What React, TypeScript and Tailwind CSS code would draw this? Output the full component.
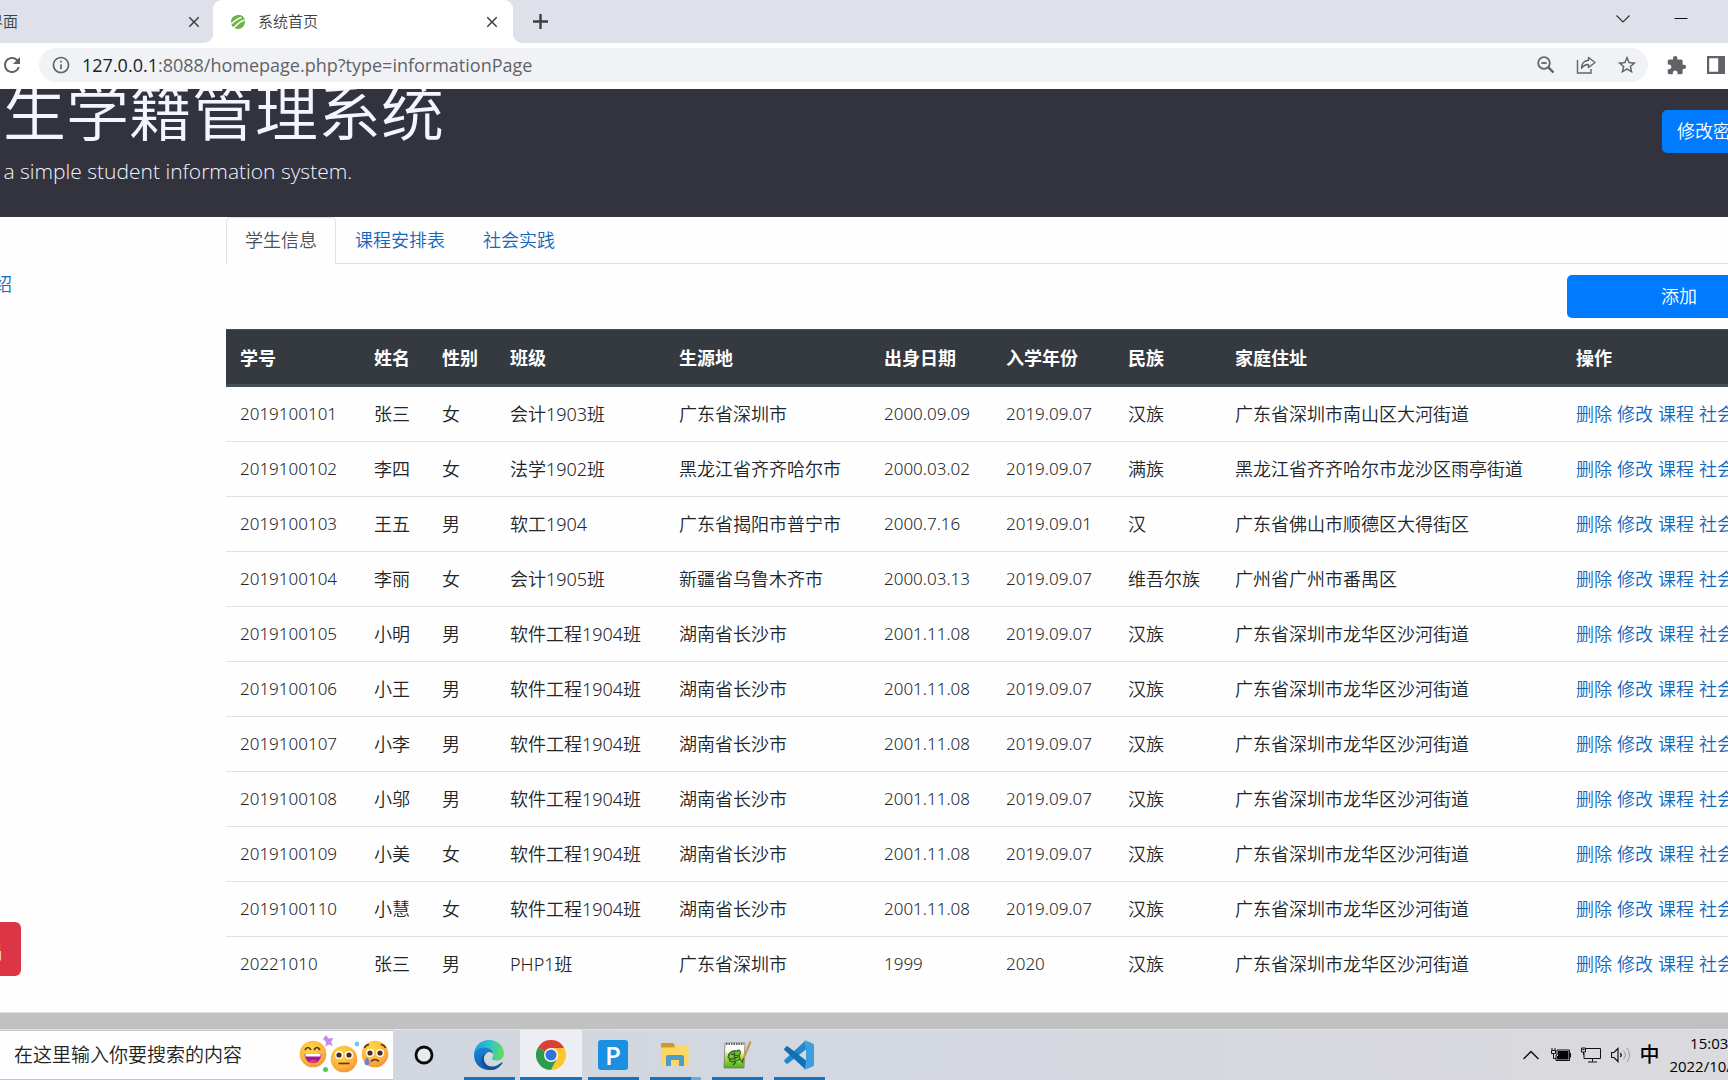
import React, { useState } from 'react';
import { MdClose, MdExtension, MdInfoOutline, MdRefresh, MdStarBorder } from 'react-icons/md';

interface Student {
  id: string;
  name: string;
  gender: string;
  className: string;
  origin: string;
  birthday: string;
  enrolled: string;
  nation: string;
  address: string;
}

const students: Student[] = [
  { id: '2019100101', name: '张三', gender: '女', className: '会计1903班', origin: '广东省深圳市', birthday: '2000.09.09', enrolled: '2019.09.07', nation: '汉族', address: '广东省深圳市南山区大河街道' },
  { id: '2019100102', name: '李四', gender: '女', className: '法学1902班', origin: '黑龙江省齐齐哈尔市', birthday: '2000.03.02', enrolled: '2019.09.07', nation: '满族', address: '黑龙江省齐齐哈尔市龙沙区雨亭街道' },
  { id: '2019100103', name: '王五', gender: '男', className: '软工1904', origin: '广东省揭阳市普宁市', birthday: '2000.7.16', enrolled: '2019.09.01', nation: '汉', address: '广东省佛山市顺德区大得街区' },
  { id: '2019100104', name: '李丽', gender: '女', className: '会计1905班', origin: '新疆省乌鲁木齐市', birthday: '2000.03.13', enrolled: '2019.09.07', nation: '维吾尔族', address: '广州省广州市番禺区' },
  { id: '2019100105', name: '小明', gender: '男', className: '软件工程1904班', origin: '湖南省长沙市', birthday: '2001.11.08', enrolled: '2019.09.07', nation: '汉族', address: '广东省深圳市龙华区沙河街道' },
  { id: '2019100106', name: '小王', gender: '男', className: '软件工程1904班', origin: '湖南省长沙市', birthday: '2001.11.08', enrolled: '2019.09.07', nation: '汉族', address: '广东省深圳市龙华区沙河街道' },
  { id: '2019100107', name: '小李', gender: '男', className: '软件工程1904班', origin: '湖南省长沙市', birthday: '2001.11.08', enrolled: '2019.09.07', nation: '汉族', address: '广东省深圳市龙华区沙河街道' },
  { id: '2019100108', name: '小邬', gender: '男', className: '软件工程1904班', origin: '湖南省长沙市', birthday: '2001.11.08', enrolled: '2019.09.07', nation: '汉族', address: '广东省深圳市龙华区沙河街道' },
  { id: '2019100109', name: '小美', gender: '女', className: '软件工程1904班', origin: '湖南省长沙市', birthday: '2001.11.08', enrolled: '2019.09.07', nation: '汉族', address: '广东省深圳市龙华区沙河街道' },
  { id: '2019100110', name: '小慧', gender: '女', className: '软件工程1904班', origin: '湖南省长沙市', birthday: '2001.11.08', enrolled: '2019.09.07', nation: '汉族', address: '广东省深圳市龙华区沙河街道' },
  { id: '20221010', name: '张三', gender: '男', className: 'PHP1班', origin: '广东省深圳市', birthday: '1999', enrolled: '2020', nation: '汉族', address: '广东省深圳市龙华区沙河街道' },
];

// the last column takes whatever is left
const columns = [
  { title: '学号', width: 'w-[134px]' },
  { title: '姓名', width: 'w-[68px]' },
  { title: '性别', width: 'w-[68px]' },
  { title: '班级', width: 'w-[169px]' },
  { title: '生源地', width: 'w-[205px]' },
  { title: '出身日期', width: 'w-[122px]' },
  { title: '入学年份', width: 'w-[122px]' },
  { title: '民族', width: 'w-[107px]' },
  { title: '家庭住址', width: 'w-[341px]' },
  { title: '操作', width: '' },
];

const actions = ['删除', '修改', '课程', '社会实践'];
const tabs = ['学生信息', '课程安排表', '社会实践'];

function Favicon() {
  return (
    <svg width="16" height="16" viewBox="0 0 16 16">
      <path d="M8 1c4-.4 7 2 7 6.500c0 4-3 7.500-7 7.500c-4 0-7-3-7-7C1 4 4 1.300 8 1z" fill="#6fb347" />
      <path d="M.5 10C4 9.500 5 4.500 11.500 3.500M3 14C7 12.500 7 8 14.500 6" stroke="#fff" strokeWidth="1.500" fill="none" />
    </svg>
  );
}

function BrowserTabs() {
  return (
    <div className="flex h-[43px] bg-white text-[15px] font-[350] text-[#3c4043]">
      <div className="flex w-[213px] shrink-0 items-center justify-between overflow-hidden rounded-br-[9px] bg-[#dee1e9] pr-2.5">
        <span className="-ml-[42px] whitespace-nowrap">登录界面</span>
        <button aria-label="关闭"><MdClose size={18} /></button>
      </div>
      <div className="w-[300px] shrink-0 bg-[#dee1e9]">
        <div className="flex h-full items-center rounded-t-[9px] bg-white pl-[17px] pr-3">
          <Favicon />
          <span className="ml-3 flex-1">系统首页</span>
          <button aria-label="关闭"><MdClose size={18} /></button>
        </div>
      </div>
      <div className="flex flex-1 items-center justify-between rounded-bl-[9px] bg-[#dee1e9] pl-5 pr-10">
        <button aria-label="新标签页">
          <svg width="15" height="15" viewBox="0 0 15 15" stroke="#3c4043" strokeWidth="2.400"><path d="M7.500 0v15M0 7.500h15" /></svg>
        </button>
        <div className="flex items-center gap-[44px] pb-1.5">
          <button aria-label="搜索标签页">
            <svg width="14" height="8" viewBox="0 0 14 8" fill="none" stroke="#333" strokeWidth="1.200"><path d="M.5.5L7 7l6.500-6.500" /></svg>
          </button>
          <button aria-label="最小化">
            <svg width="14" height="8" viewBox="0 0 14 8" stroke="#111"><path d="M.5 3.500h13" /></svg>
          </button>
        </div>
      </div>
    </div>
  );
}

function AddressBar() {
  return (
    <div className="flex h-[46px] items-center bg-white pb-0.5 text-[#5f6368]">
      <button aria-label="重新加载" className="flex w-[39px] shrink-0"><MdRefresh size={24} /></button>
      <div className="flex h-[34px] flex-1 items-center rounded-full bg-[#f0f2f5] pl-3 pr-2.5">
        <MdInfoOutline size={20} />
        <div className="ml-[11px] flex flex-1 text-[18px]">
          <span className="text-[#202124]">127.0.0.1</span>
          <span>:8088/homepage.php?type=informationPage</span>
        </div>
        <div className="flex items-center gap-5">
          <button aria-label="缩放">
            <svg width="20" height="20" viewBox="0 0 20 20" fill="none" stroke="#5f6368" strokeWidth="1.800">
              <circle cx="8" cy="8" r="5.800" />
              <path d="M5.300 8h5.400" />
              <path d="M12.300 12.300l5.200 5.200" strokeWidth="2.400" />
            </svg>
          </button>
          <button aria-label="分享">
            <svg width="20" height="20" viewBox="0 0 20 20" fill="none" stroke="#5f6368" strokeWidth="1.400">
              <path d="M1.500 5v13h13.500v-4" />
              <path d="M12.500 2.500l6.500 5-6.500 5v-3c-3.500 0-5.500 1.500-7 4 0-4.500 2.500-8 7-8.300z" strokeLinejoin="round" />
            </svg>
          </button>
          <button aria-label="收藏"><MdStarBorder size={22} /></button>
        </div>
      </div>
      <div className="flex shrink-0 items-center gap-5 pl-[18px] pr-[3px]">
        <button aria-label="扩展程序"><MdExtension size={21} /></button>
        <button aria-label="侧边栏">
          <svg width="18" height="18" viewBox="0 0 18 18" fill="#5f6368"><path d="M0 0h18v18H0zM2.200 2.200v13.600h9V2.200z" fillRule="evenodd" /></svg>
        </button>
      </div>
    </div>
  );
}

function StudentTable() {
  return (
    <table className="mt-[11px] w-full table-fixed border-separate border-spacing-0 text-left leading-6 whitespace-nowrap">
      <thead className="bg-[#343a40] text-white">
        <tr>
          {columns.map((c) => (
            <th key={c.title} className={`${c.width} border-t border-b-[3px] border-[#454d55] px-3.5 pt-4 pb-3.5 font-bold`}>{c.title}</th>
          ))}
        </tr>
      </thead>
      <tbody className="[&_td]:border-b [&_td]:border-[#dee2e6] [&_td]:px-3.5 [&_td]:py-[15px] [&_tr:last-child_td]:border-transparent">
        {students.map((s) => (
          <tr key={s.id}>
            <td className="text-[17px]">{s.id}</td>
            <td>{s.name}</td>
            <td>{s.gender}</td>
            <td>{s.className}</td>
            <td>{s.origin}</td>
            <td className="text-[17px]">{s.birthday}</td>
            <td className="text-[17px]">{s.enrolled}</td>
            <td>{s.nation}</td>
            <td>{s.address}</td>
            <td>
              <div className="flex gap-[5px]">
                {actions.map((a) => (
                  <a key={a} href="#" className="text-[#1068bd]">{a}</a>
                ))}
              </div>
            </td>
          </tr>
        ))}
      </tbody>
    </table>
  );
}

function HomePage() {
  const [active, setActive] = useState(tabs[0]);

  return (
    // the page is zoomed in and scrolled a little to the right
    <div className="flex flex-1 flex-col overflow-hidden bg-[#fefefe] font-['Noto_Sans','Noto_Sans_CJK_SC',sans-serif] text-[18px] font-[350] text-[#212529]">
      <div className="-ml-[60px] flex min-w-[1851px] flex-1 flex-col">
        <header className="flex items-start justify-between overflow-hidden bg-[#32333d] pr-[27px] pb-[29px] text-[#f3f5ff]">
          <div>
            <h1 className="-mt-2.5 text-[63px] leading-[63px]">学生学籍管理系统</h1>
            <p className="mt-[13px] font-['Open_Sans',sans-serif] text-[21px] leading-[33px] font-light">This is a simple student information system.</p>
          </div>
          <button className="mt-[21px] rounded-[5px] bg-[#007bff] px-[15px] py-2 leading-[27px] text-white">修改密码</button>
        </header>
        <div className="flex flex-1">
          <aside className="flex w-[286px] shrink-0 flex-col items-start justify-between pt-[54px] pb-9">
            <a href="#" className="leading-[27px] text-[#1068bd]">系统介绍</a>
            <button className="rounded-md bg-[#dc3545] py-[11px] pr-[18px] pl-[19px] text-[22px] leading-8 text-white">退出</button>
          </aside>
          <main className="flex-1">
            <nav className="flex border-b border-[#dee2e6]">
              {tabs.map((t) => (
                <a
                  key={t}
                  href="#"
                  onClick={() => setActive(t)}
                  className={`-mb-px rounded-t-[5px] border px-[18px] py-[9px] leading-[27px] ${
                    t === active ? 'border-[#dee2e6] border-b-[#fefefe] bg-[#fefefe] text-[#495057]' : 'border-transparent text-[#1068bd]'
                  }`}
                >
                  {t}
                </a>
              ))}
            </nav>
            <div className="mt-[11px] flex justify-end">
              <button className="w-[224px] rounded-[5px] bg-[#007bff] py-2 leading-[27px] text-white">添加</button>
            </div>
            <StudentTable />
          </main>
        </div>
      </div>
    </div>
  );
}

function SearchFaces() {
  return (
    <svg width="92" height="42" viewBox="0 0 92 42" className="shrink-0">
      <defs>
        <radialGradient id="face" cx=".4" cy=".3" r=".8">
          <stop offset="0" stopColor="#ffd84a" />
          <stop offset=".65" stopColor="#fbb03b" />
          <stop offset="1" stopColor="#ee8a3c" />
        </radialGradient>
      </defs>
      <circle cx="15" cy="20" r="13.300" fill="url(#face)" />
      <path d="M7 16q3-5 6 0M16 16q3-5 6 0" stroke="#5a3218" strokeWidth="1.700" fill="none" />
      <path d="M6.500 20h17q-1 9-8.500 9t-8.500-9z" fill="#a3189a" />
      <path d="M7.500 20h15v2.500h-15z" fill="#fff" />
      <path d="M11 27q4-2.500 8 0-4 3-8 0z" fill="#ef3e6a" />
      <circle cx="46" cy="25" r="13.300" fill="url(#face)" />
      <circle cx="41" cy="21" r="4" fill="#fff" />
      <circle cx="51" cy="21" r="4" fill="#fff" />
      <circle cx="41" cy="21" r="2.600" fill="#4a2a18" />
      <circle cx="51" cy="21" r="2.600" fill="#4a2a18" />
      <path d="M40.500 29.500h11" stroke="#5a3218" strokeWidth="1.600" />
      <circle cx="77" cy="20" r="13.300" fill="url(#face)" />
      <circle cx="72" cy="19" r="4" fill="#fff" />
      <circle cx="82" cy="19" r="4" fill="#fff" />
      <circle cx="72" cy="19" r="2.600" fill="#4a2a18" />
      <circle cx="82" cy="19" r="2.600" fill="#4a2a18" />
      <path d="M66.500 14q1-3 4.500-3.500M83 10.500q3.500.5 4.500 3.500M73 27.500q4-4 8 0" stroke="#5a3218" strokeWidth="1.600" fill="none" />
      <path d="M69 23q5 7 0 8.500-5-1.500 0-8.500z" fill="#6d7fd8" />
      <path d="M28 1l2.500 3.500 5-.5-2.500 4 2 4-4-1.500-3.500 2 .5-4.500-3-3z" fill="#c98be8" />
      <circle cx="59" cy="10" r="2.400" fill="#7cc5ee" />
      <circle cx="27.500" cy="35.500" r="2.500" fill="#4fc46a" />
    </svg>
  );
}

function EdgeIcon() {
  return (
    <svg width="30" height="30" viewBox="0 0 30 30">
      <defs>
        <linearGradient id="edgeTop" x1="0" y1=".4" x2="1" y2=".5">
          <stop offset="0" stopColor="#1e9fe0" />
          <stop offset=".5" stopColor="#2fc3c9" />
          <stop offset="1" stopColor="#63dd5a" />
        </linearGradient>
        <linearGradient id="edgeBody" x1="0" y1="0" x2=".3" y2="1">
          <stop offset="0" stopColor="#1b86d8" />
          <stop offset="1" stopColor="#0c62b5" />
        </linearGradient>
      </defs>
      <path d="M15 0C23.500 0 30 6 30 13.500c0 4.500-3.300 7-7 7-3.500 0-5-1.200-5-2 0-.7 1.400-1.500 1.400-4C19.400 11 16 8.500 11.500 8.500 6 8.500 1.500 11.500 0 15 0 6.500 6.500 0 15 0z" fill="url(#edgeTop)" />
      <path d="M0 15c0-3.500 4-7.500 9.500-7.500 5 0 9.800 2.500 9.900 7-1-2-3-2.700-4.700-2.400C11 13 9.500 16 10 19.500c.6 5 5 9 10 9.500-1.500.7-3.200 1-5 1C6.500 30 0 23.500 0 15z" fill="url(#edgeBody)" />
      <path d="M13 12.800c-3 2.200-4.200 6-2.300 9.700 2.300 4 8 5.500 13 2.500 1.300-.7 2.700-2 4.300-2.800.5 0 .7.500.4 1C26.500 26.200 22.500 30 17 30 10 29.500 6.500 24 7.500 19c.6-3 2.500-5.200 5.500-6.200z" fill="#174f96" />
    </svg>
  );
}

function ChromeIcon() {
  return (
    <svg width="30" height="30" viewBox="0 0 30 30">
      <path d="M15 15L2 7.500A15 15 0 0 1 28 7.500z" fill="#dc4032" />
      <path d="M15 15L2 7.500A15 15 0 0 0 15 30l6-11z" fill="#2c9c4b" />
      <path d="M15 8h13.300A15 15 0 0 1 15 30l6.200-11.500z" fill="#fcc62d" />
      <circle cx="15" cy="15" r="7" fill="#fff" />
      <circle cx="15" cy="15" r="5.600" fill="#3273e0" />
    </svg>
  );
}

function FolderIcon() {
  return (
    <svg width="30" height="30" viewBox="0 0 30 30">
      <path d="M1 3h12l2 2.500V12H1z" fill="#cf9a27" />
      <path d="M1 7.500h13l2-2h12.500V25H1z" fill="#fbd765" />
      <path d="M6 26V17a2 2 0 0 1 2-2h14a2 2 0 0 1 2 2v9h-5v-6h-8v6z" fill="#4f9cc8" />
    </svg>
  );
}

function NotepadIcon() {
  return (
    <svg width="30" height="30" viewBox="0 0 30 30">
      <defs>
        <linearGradient id="pad" x1="0" y1="0" x2="0" y2="1">
          <stop offset=".3" stopColor="#fdfdf8" />
          <stop offset=".55" stopColor="#b5e34a" />
          <stop offset="1" stopColor="#4cae22" />
        </linearGradient>
      </defs>
      <path d="M3 3h20l-1 25H2z" fill="url(#pad)" stroke="#777" strokeWidth=".8" />
      <path d="M4 4h18" stroke="#666" strokeDasharray="1.500 1" strokeWidth="2" />
      <path d="M6 17c1-5 5-7 9-6 4-3 4 3 2 5 2 2 0 5-4 5-3 2-7 0-5-2zM9 14l8 2M7 20l9-3M12 11l1 9M14 22l-3 3M18 19l3 4" stroke="#2a5519" strokeWidth="1.100" fill="#75bd38" />
      <path d="M28.500 1.500L21 20" stroke="#c69a55" strokeWidth="2.200" />
      <path d="M21.500 18.500l-1 3" stroke="#544127" strokeWidth="1.200" />
    </svg>
  );
}

function VsCodeIcon() {
  return (
    <svg width="30" height="30" viewBox="0 0 30 30">
      <path d="M22 9.500L4 23.500c-.6.400-1.200.3-1.700-.1L.6 21.800c-.6-.6-.6-1.400 0-2L21.500.500z" fill="#2489ca" />
      <path d="M22 20.500L4 6.500c-.6-.4-1.200-.3-1.700.1L.6 8.200c-.6.600-.6 1.400 0 2L21.500 29.500z" fill="#1070b3" />
      <path d="M21.500.4l7.300 3.200c.7.300 1.200 1 1.200 1.800v19.200c0 .8-.5 1.500-1.200 1.800l-7.300 3.200c-.8.300-1.500.1-2-.4.800.7 2.500.2 2.500-1.200V2c0-1.400-1.700-1.900-2.500-1.200.5-.5 1.200-.7 2-.4z" fill="#3c9fe0" />
    </svg>
  );
}

function ParkingIcon() {
  return (
    <span className="flex size-[30px] items-center justify-center rounded-[3px] bg-[#1b90e0] text-[26px] leading-none font-semibold text-white">P</span>
  );
}

const apps = [
  { name: 'Edge', icon: <EdgeIcon />, focused: false },
  { name: 'Chrome', icon: <ChromeIcon />, focused: true },
  { name: 'phpStudy', icon: <ParkingIcon />, focused: false },
  { name: '文件资源管理器', icon: <FolderIcon />, focused: false, stacked: true },
  { name: 'Notepad++', icon: <NotepadIcon />, focused: false },
  { name: 'VS Code', icon: <VsCodeIcon />, focused: false },
];

function Taskbar() {
  return (
    <div className="flex h-[50px] overflow-hidden bg-linear-to-r from-[#d0d5df] via-[#d3d7e0] to-[#dbdade] text-black">
      <label className="flex w-[393px] shrink-0 items-center border-y border-[#c4c4c8] bg-[#fefefe] pl-3.5 pr-[3px]">
        <input
          type="text"
          aria-label="搜索"
          placeholder="在这里输入你要搜索的内容"
          className="min-w-0 flex-1 text-[19px] font-[350] outline-none placeholder:text-[#222]"
        />
        <SearchFaces />
      </label>
      <button aria-label="Cortana" className="flex w-[65px] shrink-0 items-center justify-center pr-1">
        <svg width="20" height="20" viewBox="0 0 20 20"><circle cx="10" cy="10" r="8" fill="#e8eaee" stroke="#0a0a0a" strokeWidth="2.800" /></svg>
      </button>
      {apps.map((app) => (
        <button
          key={app.name}
          aria-label={app.name}
          className={`flex w-[62px] shrink-0 flex-col items-center justify-between pt-2.5 ${app.focused ? 'bg-[#eceef3]' : ''}`}
        >
          {app.icon}
          <span className={`flex h-[3px] justify-end bg-[#1673bf] ${app.focused ? 'w-full' : 'w-[51px]'}`}>
            {app.stacked && <span className="w-2.5 bg-[#6fa9d3]" />}
          </span>
        </button>
      ))}
      <div className="-mr-[21px] ml-auto flex shrink-0 items-center">
        <button aria-label="显示隐藏的图标" className="mr-3">
          <svg width="16" height="10" viewBox="0 0 16 10" fill="none" stroke="#111" strokeWidth="1.500"><path d="M.5 9L8 1.500 15.500 9" /></svg>
        </button>
        <svg width="20" height="14" viewBox="0 0 20 14" className="mr-2.5">
          <path d="M1 0v2.500M4 0v2.500M.5 2.500h4v3h-4zM2.500 5.500v5H5" stroke="#111" fill="none" />
          <path d="M6 2h12.500v10.500H5V7h1z" fill="none" stroke="#111" />
          <path d="M7 3h10.500v8.500H6V8h1z" fill="#050505" />
          <path d="M19.500 5v4.500" stroke="#111" />
        </svg>
        <svg width="20" height="18" viewBox="0 0 20 18" fill="none" stroke="#111" className="mr-2.5">
          <path d="M5 2.500h14.500v10H3V7M11.500 12.500v3M7 16h9" />
          <path d="M.5 2h4v4h-4zM2.500 6v3M1.500 3.500h2" />
        </svg>
        <svg width="20" height="18" viewBox="0 0 20 18" fill="none" stroke="#111" className="mr-2">
          <path d="M.5 6.500H3L7 2.500v13L3 11.500H.5z" strokeWidth="1.200" />
          <path d="M9.500 7q1.500 2 0 4" strokeWidth="1.300" />
          <path d="M12.500 4.500q3.500 4.500 0 9M16 2q5 7 0 14" stroke="#9a9a9e" />
        </svg>
        <span className="mr-2.5 text-[20px] font-medium">中</span>
        <div className="text-center text-[15px] leading-[23px]">
          <div>15:03</div>
          <div>2022/10/16</div>
        </div>
      </div>
    </div>
  );
}

export default function App() {
  return (
    <div className="flex min-h-screen flex-col overflow-hidden font-['Open_Sans','Noto_Sans_CJK_SC',sans-serif]">
      <BrowserTabs />
      <AddressBar />
      <HomePage />
      <div className="h-[18px] border-y border-t-[#dcdcdc] border-b-[#e4e4e8] bg-[#c1c1c1]" />
      <Taskbar />
    </div>
  );
}
